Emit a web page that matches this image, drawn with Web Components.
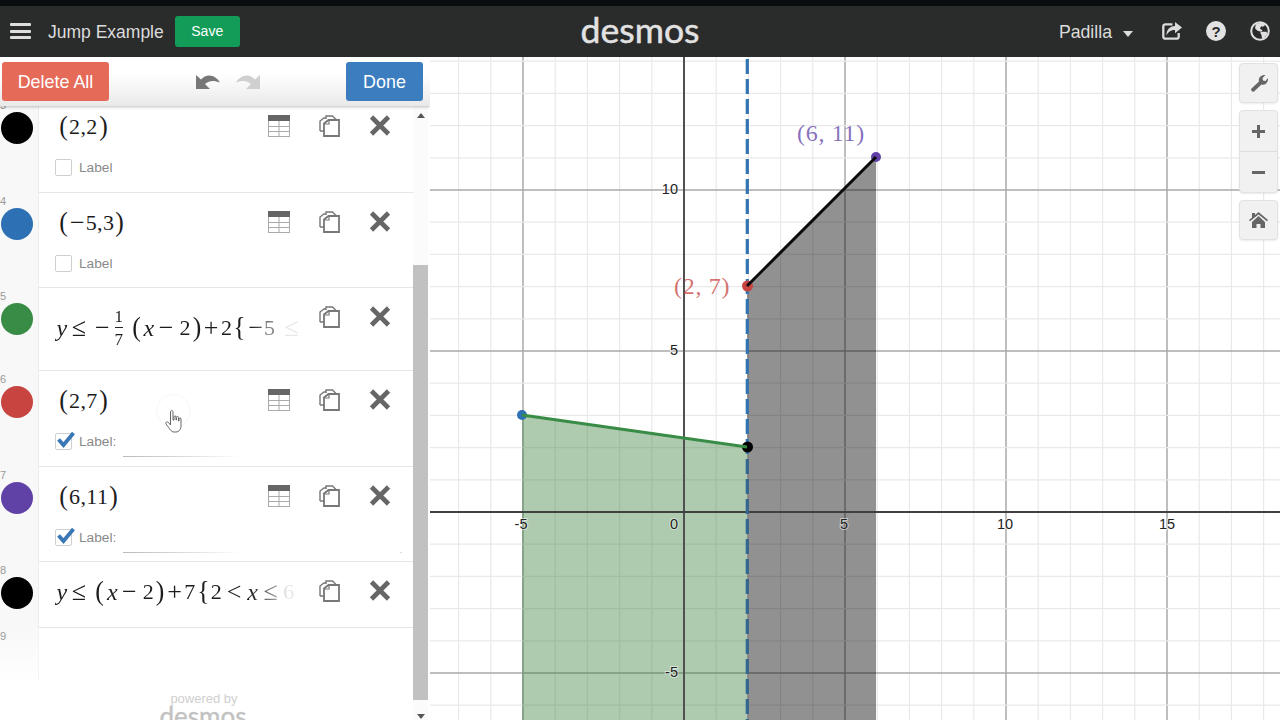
<!DOCTYPE html>
<html lang="en">
<head>
<meta charset="utf-8">
<title>Jump Example</title>
<style>
html,body{margin:0;padding:0;width:1280px;height:720px;overflow:hidden;background:#fff}
</style>
</head>
<body>
<dm-app>
  <dm-header slot="header" title-text="Jump Example" user="Padilla"></dm-header>
  <dm-panel slot="panel">
    <dm-toolbar slot="toolbar"></dm-toolbar>
    <dm-row n="3" color="#000" h="87" offset="9" kind="point" label="off">
      <dm-math><dm-p>(</dm-p>2,2<dm-p>)</dm-p></dm-math>
    </dm-row>
    <dm-row n="4" color="#2d70b3" h="95" kind="point" label="off">
      <dm-math><dm-p>(</dm-p><dm-op t>−</dm-op>5,3<dm-p>)</dm-p></dm-math>
    </dm-row>
    <dm-row n="5" color="#388c46" h="83" kind="expr" label="none" low>
      <dm-math fade><dm-v>y</dm-v><dm-op>≤</dm-op><dm-op>−</dm-op><dm-frac n="1" d="7"></dm-frac><dm-p>(</dm-p><dm-v>x</dm-v><dm-op w>−</dm-op>2<dm-p g>)</dm-p><dm-op pl>+</dm-op>2<dm-p>{</dm-p><dm-op t>−</dm-op>5<dm-op w3>≤</dm-op></dm-math>
    </dm-row>
    <dm-row n="6" color="#c74440" h="96" kind="point" label="on">
      <dm-math><dm-p>(</dm-p>2,7<dm-p>)</dm-p></dm-math>
    </dm-row>
    <dm-row n="7" color="#6042a6" h="95" kind="point" label="on" speck>
      <dm-math><dm-p>(</dm-p>6,11<dm-p>)</dm-p></dm-math>
    </dm-row>
    <dm-row n="8" color="#000" h="66" kind="expr" label="none">
      <dm-math fade><dm-v>y</dm-v><dm-op>≤</dm-op><dm-p f>(</dm-p><dm-v>x</dm-v><dm-op w>−</dm-op>2<dm-p g>)</dm-p><dm-op pl>+</dm-op>7<dm-p>{</dm-p>2<dm-op>&lt;</dm-op><dm-v>x</dm-v><dm-op w2>≤</dm-op>6</dm-math>
    </dm-row>
    <dm-row n="9" h="52" kind="empty" label="none"></dm-row>
    <dm-footer slot="footer"></dm-footer>
    <dm-scrollbar slot="scrollbar"></dm-scrollbar>
    <dm-cursor slot="cursor"></dm-cursor>
  </dm-panel>
  <dm-graph slot="graph"></dm-graph>
</dm-app>

<script>
const SANS = '"Liberation Sans",Arial,sans-serif';
const SERIF = '"Liberation Serif","Times New Roman",serif';
function comp(name, html, setup){
  customElements.define(name, class extends HTMLElement{
    constructor(){
      super();
      const r=this.attachShadow({mode:'open'});
      r.innerHTML = typeof html==='function' ? html(this) : html;
    }
    connectedCallback(){
      if(typeof html==='function') this.shadowRoot.innerHTML = html(this);
      if(setup) setup(this, this.shadowRoot);
    }
  });
}

comp('dm-app', `<style>
:host{display:grid;grid-template-columns:430px 850px;grid-template-rows:6px 51px 663px;width:1280px;height:720px;overflow:hidden;font-family:${SANS}}
.strip{grid-column:1/3;background:#0b0e10}
::slotted([slot=header]){grid-column:1/3}
</style>
<div class="strip"></div>
<slot name="header"></slot>
<slot name="panel"></slot>
<slot name="graph"></slot>`);

comp('dm-header', h=>`<style>
:host{display:grid;grid-template-columns:1fr auto 1fr;align-items:center;background:#2a2b2b;color:#dcdcdc;height:51px;padding-top:1px;box-sizing:border-box;position:relative;z-index:3}
.l,.r{display:flex;align-items:center}
.l{padding-left:10px}
.ham{width:21px;height:16px;display:flex;flex-direction:column;justify-content:space-between;margin-right:17px;margin-top:-2px}
.ham b{display:block;height:3px;border-radius:1px;background:#dedede}
.title{font-size:17.5px;margin-right:11px;margin-top:0}
.save{width:65px;height:31px;display:flex;align-items:center;justify-content:center;background:#139c58;border-radius:3px;color:#fff;font-size:14px;margin-top:-2px}
.logo{font:400 35.6px/1 "Lato","Open Sans",sans-serif;color:#e2e2e2;-webkit-text-stroke:.5px #e2e2e2;margin-top:-4px}
.r{justify-content:flex-end;padding-right:10px}
.user{font-size:17.7px;margin-right:11px;margin-top:1px}
.caret{width:0;height:0;border:5.5px solid transparent;border-top:6px solid #dcdcdc;border-bottom:0;margin-right:29px;margin-top:3px}
svg{display:block;margin-top:-2px}
.help{width:20px;height:20px;border-radius:50%;background:#e2e2e2;color:#2a2b2b;display:flex;align-items:center;justify-content:center;font:700 15px/1 ${SANS};margin:-2px 24px 0 24px}
</style>
<div class="l"><div class="ham"><b></b><b></b><b></b></div><span class="title">${h.getAttribute('title-text')||''}</span><span class="save">Save</span></div>
<div class="logo">desmos</div>
<div class="r"><span class="user">${h.getAttribute('user')||''}</span><span class="caret"></span>
<svg width="20" height="18" viewBox="0 0 20 18"><path d="M10.500 2.400H3.500A2 2 0 0 0 1.300 4.500v10a2 2 0 0 0 2.200 2.200h11a2 2 0 0 0 2.200-2.200V11" fill="none" stroke="#dcdcdc" stroke-width="2.300"/><path d="M13 0l7 5.600-7 5.600V8C9 8 6.500 9.400 4.500 13.500c-.3-5.500 3-9.300 8.500-9.500z" fill="#dcdcdc"/></svg>
<span class="help">?</span>
<svg width="20" height="20" viewBox="0 0 20 20"><circle cx="10" cy="10" r="8.800" fill="#2a2b2b" stroke="#e0e0e0" stroke-width="2"/><path d="M6.500 2.500l5.500-.8 3.500 2-2.500 2-2-.5-1 2.500 2.500 1.500-1.500 1.500-3.500-1-2.500-2.500.5-2.500zM11 10.500l5.500.3 1 2.200-3.500 4-2 .5-.5-3.500-1.200-2z" fill="#e0e0e0"/></svg>
</div>`);

comp('dm-panel', `<style>
:host{display:block;position:relative;background:#fff;overflow:hidden;height:663px;z-index:2}
.list{position:absolute;left:0;top:49px;width:413px;bottom:0;overflow:hidden}
.top{position:relative;z-index:2}
</style>
<div class="top"><slot name="toolbar"></slot></div>
<div class="list"><slot></slot></div>
<slot name="footer"></slot>
<slot name="scrollbar"></slot>
<slot name="cursor"></slot>`);

comp('dm-toolbar', `<style>
:host{display:flex;align-items:center;justify-content:space-between;height:49px;box-sizing:border-box;padding:0 7px 1px 2px;background:linear-gradient(#fff 35%,#e9e9e9);box-shadow:0 1px 3px rgba(0,0,0,.25);color:#fff;font-size:17.9px}
.b{display:flex;align-items:center;justify-content:center;height:39px;border-radius:3px;box-sizing:border-box}
.del{width:107px;background:#e66a58;margin-top:1px;padding-top:1px}
.done{width:77px;background:#3c7dbf;padding-top:3px}
.hist{display:flex;gap:16px;margin-left:0}
svg{display:block}
</style>
<span class="b del">Delete All</span>
<span class="hist">
<svg width="24" height="16" viewBox="0 0 24 16"><path d="M0 2v14h14l-5-5c4-3.500 9-4 15-1.500C20 2.500 11-.5 5 6.500z" fill="#777"/></svg>
<svg width="24" height="16" viewBox="0 0 24 16"><path d="M24 2v14H10l5-5c-4-3.500-9-4-15-1.500C4 2.500 13-.5 19 6.500z" fill="#cfcfcf"/></svg>
</span>
<span class="b done">Done</span>`);

const ICON_TABLE=`<svg class="ic tb" width="22" height="22" viewBox="0 0 22 22"><rect x=".5" y=".5" width="21" height="21" fill="#fff" stroke="#aaa"/><rect width="22" height="6" fill="#666"/><path d="M0 11.500h22M0 16.500h22M11 6v16" stroke="#aaa" fill="none"/></svg>`;
const ICON_COPY=`<svg class="ic cp" width="21" height="22" viewBox="0 0 21 22"><path d="M7 4V1h6.500L17 4.500V5M1 16V6l4-3h2M1 16h4" fill="#fff" stroke="#777" stroke-width="1.400"/><path d="M5 21V8.500L9.500 5H20v16z" fill="#fff" stroke="#777" stroke-width="1.800"/><path d="M5 9h5V5" fill="none" stroke="#777" stroke-width="1.200"/></svg>`;
const ICON_X=`<svg class="ic x" width="22" height="21" viewBox="0 0 22 21"><path d="M2.500 2L19.500 19M19.500 2L2.500 19" stroke="#666" stroke-width="4.600" fill="none"/></svg>`;

comp('dm-row', el=>{
  const color=el.getAttribute('color'), kind=el.getAttribute('kind'), label=el.getAttribute('label');
  const h=+el.getAttribute('h'), off=+(el.getAttribute('offset')||0);
  const check=label==='on'?`<svg class="tick" width="20" height="18" viewBox="0 0 20 18"><path d="M2.500 8.500l5 5.500L17.500 2" fill="none" stroke="#3a78b5" stroke-width="3.800"/></svg>`:'';
  const empty=kind==='empty';
  return `<style>
  :host{display:block;height:${h}px;position:relative;box-sizing:border-box;border-bottom:1px solid ${empty?'transparent':'#e6e6e6'};font-family:${SANS}}
  .wrap{position:absolute;left:0;right:0;top:${-off}px;height:${h+off}px}
  .gutter{position:absolute;left:0;top:0;bottom:-1px;width:38px;background:${empty?'linear-gradient(#f8f8f8,#fff)':'#f8f8f8'};border-right:1px solid ${empty?'#f4f4f4':'#ececec'}}
  .n{position:absolute;left:0;top:2px;font-size:11px;color:#999;line-height:12px}
  .dot{position:absolute;left:1px;top:15px;width:32px;height:32px;border-radius:50%;background:${color||'transparent'}}
  .math{position:absolute;left:55px;top:${el.hasAttribute('low')?16:6}px;height:48px;width:243px;display:flex;align-items:center}
  .tools{position:absolute;left:268px;top:19px;width:124px;height:22px}
  .ic{display:block;position:absolute;top:0}
  .tb{left:0;top:-1px}.cp{left:51px;top:-1px}.x{left:101px;top:-1px}
  .lab{position:absolute;left:55px;top:61px;height:18px;display:flex;align-items:center;color:#8a8a8a;font-size:13.700px}
  .box{width:15px;height:15px;border:1px solid #cfcfcf;border-radius:2px;margin-right:7px;flex:none;position:relative;background:#fff}
  .tick{position:absolute;left:0;top:-3px}
  .ul{position:absolute;left:123px;top:85px;width:117px;height:1px;background:linear-gradient(90deg,#bbb,#eee 80%,#fff)}
  .speck{position:absolute;left:400px;top:85px;width:2px;height:1px;background:#ddd}
  </style>
  <div class="wrap">
  <div class="gutter"><span class="n">${el.getAttribute('n')}</span>${color?'<span class="dot"></span>':''}</div>
  ${empty?'':`<div class="math"><slot></slot></div>
  <div class="tools">${kind==='point'?ICON_TABLE:''}${ICON_COPY}${ICON_X}</div>`}
  ${label==='none'?'':`<div class="lab"><span class="box">${check}</span>${label==='on'?'Label:':'Label'}</div>`}
  ${label==='on'?'<div class="ul"></div>':''}
  ${el.hasAttribute('speck')?'<div class="speck"></div>':''}
  </div>`;
});

const MASK='linear-gradient(90deg,#000 195px,rgba(0,0,0,.5) 218px,rgba(0,0,0,.1) 232px)';
comp('dm-math', el=>`<style>
:host{display:flex;align-items:center;height:48px;width:243px;padding-left:${el.hasAttribute('fade')?0:3}px;box-sizing:border-box;font:22px/1 ${SERIF};letter-spacing:.4px;color:#1c1c1c;white-space:nowrap;overflow:hidden;
${el.hasAttribute('fade')?`-webkit-mask-image:${MASK};mask-image:${MASK};`:''}}
</style><slot></slot>`);

comp('dm-p', `<style>
:host{display:inline-block;font-size:27px;font-weight:400;line-height:1;letter-spacing:0;transform:translateY(-1px) scaleX(.95);padding:0 1px}
:host([g]){padding:0 1px 0 1.500px}
:host([f]){padding:0 1px 0 5px}
</style><slot></slot>`);

comp('dm-v', `<style>
:host{display:inline-block;font-size:24px;font-style:italic;letter-spacing:0;line-height:1;padding:0 0 0 1.500px}
</style><slot></slot>`);

comp('dm-op', `<style>
:host{display:inline-block;padding:0 4.500px;font-size:26px;letter-spacing:0;line-height:1}
:host([t]){padding:0 1px}
:host([pl]){padding:0 2.500px 0 1.500px}
:host([w]){padding:0 6px 0 4.500px}
:host([w2]){padding:0 5.500px}
:host([w3]){padding:0 0 0 9px}
</style><slot></slot>`);

comp('dm-frac', el=>`<style>
:host{display:inline-flex;flex-direction:column;align-items:center;font-size:17px;line-height:1;margin:0 8px 0 .5px;width:12px;letter-spacing:0}
.n{padding-bottom:2px;border-bottom:1px solid #222;width:100%;text-align:center}
.d{padding-top:3px}
</style><span class="n">${el.getAttribute('n')}</span><span class="d">${el.getAttribute('d')}</span>`);

comp('dm-footer', `<style>
:host{display:block;position:absolute;left:0;width:413px;top:635px;text-align:center;color:#cfcfcf;z-index:1}
div{font:13px/14px ${SANS};margin-left:-5px}
.logo{font:400 26px/22px "Lato","Open Sans",sans-serif;color:#c2c2c2;-webkit-text-stroke:.4px #c2c2c2;margin-left:-7px;margin-top:-1px}
</style><div>powered by</div><div class="logo">desmos</div>`);

comp('dm-scrollbar', `<style>
:host{display:block;position:absolute;left:413px;top:49px;width:15px;bottom:0;background:#fbfbfb}
.thumb{position:absolute;left:0;right:0;top:159px;height:435px;background:#c1c1c1}
.up,.dn{position:absolute;left:3.500px;width:0;height:0;border:4px solid transparent}
.up{top:7px;border-top:0;border-bottom:5px solid #555}
.dn{bottom:1px;border-bottom:0;border-top:5px solid #555}
</style><div class="up"></div><div class="thumb"></div><div class="dn"></div>`);

comp('dm-cursor', `<style>
:host{display:block;position:absolute;left:156px;top:337px;width:35px;height:40px;z-index:4}
svg{display:block}
</style><svg width="35" height="40" viewBox="0 0 35 40"><circle cx="17.500" cy="17" r="16.500" fill="none" stroke="#f6f6f6"/><path transform="translate(1.500 6)" d="M13 12c0-2 2.500-2 2.500 0v8l1 0v-3c0-1.500 2-1.500 2 0v3h.5v-2.500c0-1.500 2-1.500 2 0V21h.5v-2c0-1.500 2-1.500 2 0v7c0 3-2 6-5 6h-2c-3 0-4-3-8-8-1-1.500 1-3 2.500-1.500L13 25z" fill="#fff" stroke="#666" stroke-width="1"/></svg>`);

comp('dm-graph', `<style>
:host{display:block;position:relative;overflow:hidden;height:663px;background:#fff}
svg{display:block;position:absolute;left:0;top:0}
text{font-family:${SANS};font-size:14.500px;fill:#222;stroke:rgba(255,255,255,.5);stroke-width:2px;paint-order:stroke}
.math{font-family:${SERIF};font-size:24px;stroke:none;letter-spacing:.7px}
.zoom{position:absolute;left:809px;width:39px;background:#f1f1f1;border:1px solid #e2e2e2;box-sizing:border-box;border-radius:4px;box-shadow:0 1px 2px rgba(0,0,0,.08);display:flex;flex-direction:column}
.zoom div{flex:1;display:flex;align-items:center;justify-content:center}
.zoom div+div{border-top:1px solid #ddd}
</style>
<svg id="s" width="850" height="663" viewBox="430 57 850 663"></svg>
<div class="zoom" style="top:6px;height:40px"><div><svg style="position:static" width="18" height="18" viewBox="0 0 18 18"><path d="M1.500 14.500L9 7.500C8 4 11 .5 15.500 1L12.500 4l.5 2.500 2.500.5 2.500-3c.5 4.500-3 7.500-6.500 6.500L4 17.500c-1.500 1-3.800-1.300-2.500-3z" fill="#666"/></svg></div></div>
<div class="zoom" style="top:53px;height:83px"><div><svg style="position:static" width="15" height="15" viewBox="0 0 15 15"><path d="M7.500 1v13M1 7.500h13" stroke="#666" stroke-width="3" fill="none"/></svg></div><div><svg style="position:static" width="15" height="15" viewBox="0 0 15 15"><path d="M1 7.500h13" stroke="#666" stroke-width="3" fill="none"/></svg></div></div>
<div class="zoom" style="top:143px;height:40px"><div><svg style="position:static" width="19" height="16" viewBox="0 0 19 16"><path d="M9.500 0L19 8l-1 1.200L9.500 2.500 1 9.200 0 8l3-2.500V1h3v2z" fill="#666"/><path d="M3 10l6.500-6 6.500 6v6h-4.500v-4h-4v4H3z" fill="#666"/></svg></div></div>`,
(el,r)=>{
  const ox=684, oy=512, u=32.2;
  let s='';
  const vx=i=>ox+i*u, vy=i=>oy-i*u;
  for(let i=-8;i<=19;i++){
    const x=vx(i).toFixed(1);
    const maj=i%5===0;
    if(i!==0) s+=`<line x1="${x}" x2="${x}" y1="57" y2="720" stroke="${maj?'#a3a3a3':'#e9e9e9'}" stroke-width="${maj?1.400:1.200}"/>`;
  }
  for(let i=-7;i<=14;i++){
    const y=vy(i).toFixed(1);
    const maj=i%5===0;
    if(i!==0) s+=`<line x1="430" x2="1280" y1="${y}" y2="${y}" stroke="${maj?'#a8a8a8':'#e9e9e9'}" stroke-width="${maj?1.400:1.200}"/>`;
  }
  s+=`<polygon points="522,415 747,447 747,720 522,720" fill="#357d3a" fill-opacity=".4"/>`;
  s+=`<polygon points="747,286 876,157 876,720 747,720" fill="#000" fill-opacity=".43"/>`;
  s+=`<line x1="684" x2="684" y1="57" y2="720" stroke="#505050" stroke-width="2"/>`;
  s+=`<line x1="430" x2="1280" y1="512" y2="512" stroke="#404040" stroke-width="2"/>`;
  s+=`<line x1="747.300" x2="747.300" y1="59" y2="459" stroke="#3274b0" stroke-width="3.200" stroke-dasharray="15 5"/>`;
  s+=`<line x1="747.300" x2="747.300" y1="459" y2="720" stroke="#33678f" stroke-width="3.200" stroke-dasharray="15 5"/>`;
  s+=`<circle cx="522" cy="415" r="5" fill="#2d70b3"/><circle cx="747.500" cy="447" r="5.500" fill="#000"/><circle cx="747.500" cy="286" r="5.500" fill="#c74440"/><circle cx="876" cy="157" r="5" fill="#6042a6"/>`;
  s+=`<line x1="522" y1="415" x2="747" y2="447" stroke="#388c46" stroke-width="3"/>`;
  s+=`<line x1="747" y1="286" x2="876" y2="157" stroke="#0a0a0a" stroke-width="3"/>`;
  const tx=[[-5,521],[5,844],[10,1005],[15,1167]];
  tx.forEach(([t,x])=>s+=`<text x="${x}" y="529" text-anchor="middle">${t}</text>`);
  s+=`<text x="678" y="529" text-anchor="end">0</text>`;
  [[10,194],[5,355],[-5,677]].forEach(([t,y])=>s+=`<text x="678" y="${y}" text-anchor="end">${t}</text>`);
  s+=`<text class="math" x="797" y="141" style="fill:#6042a6;fill-opacity:.75">(6, 11)</text>`;
  s+=`<text class="math" x="674" y="294" style="fill:#c74440;fill-opacity:.75">(2, 7)</text>`;
  r.getElementById('s').innerHTML=s;
});
</script>
</body>
</html>
